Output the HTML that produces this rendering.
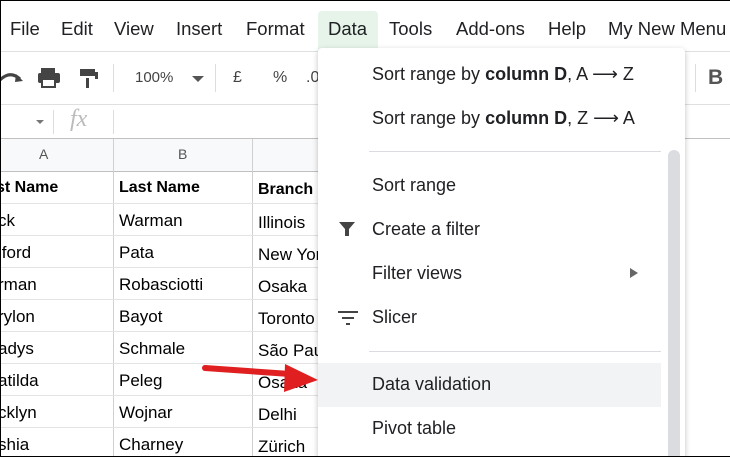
<!DOCTYPE html>
<html style="overflow:hidden;width:730px;height:457px"><head><style>
*{margin:0;padding:0;box-sizing:border-box}
body{width:730px;height:457px;overflow:hidden;background:#fff;font-family:"Liberation Sans",Arial,sans-serif;position:relative;color:#202124}
.a{position:absolute;white-space:nowrap}
.m{font-size:18.5px;top:18px;color:#202124}
.hl{position:absolute;left:0;width:318px;height:1px;background:#e2e3e3}
.vl{position:absolute;width:1px;background:#e2e3e3}
.c{font-size:17px;position:absolute;white-space:nowrap;color:#000}
.mi{position:absolute;left:372px;font-size:18px;color:#202124;white-space:nowrap}
</style></head><body>
<div style="position:absolute;left:0;top:0;width:730px;height:457px;border:1px solid #000;border-right:none;z-index:50;pointer-events:none"></div>
<div class="a" style="left:318px;top:11px;width:60px;height:40px;background:#e6f4ea;border-radius:4px 4px 0 0"></div>
<div class="a m" style="left:10px">File</div>
<div class="a m" style="left:61px">Edit</div>
<div class="a m" style="left:114px">View</div>
<div class="a m" style="left:176px">Insert</div>
<div class="a m" style="left:246px">Format</div>
<div class="a m" style="left:328px">Data</div>
<div class="a m" style="left:389px">Tools</div>
<div class="a m" style="left:456px">Add-ons</div>
<div class="a m" style="left:548px">Help</div>
<div class="a m" style="left:608px">My New Menu</div>
<div class="a" style="left:0;top:51px;width:730px;height:1px;background:#e0e0e0"></div>
<svg class="a" style="left:0;top:66px" width="130" height="24">
<path d="M0 14 Q10 4 20 13" stroke="#444" stroke-width="3" fill="none"/><path d="M16 8 L23 15 L15 16Z" fill="#444"/>
<rect x="41" y="2" width="14" height="5" fill="#444"/><rect x="38" y="7" width="22" height="10" rx="2" fill="#444"/><rect x="42" y="13" width="13" height="8" fill="#fff" stroke="#444" stroke-width="2"/>
<rect x="80" y="3" width="15" height="7" fill="#444"/><rect x="95" y="6" width="3" height="7" fill="#444"/><rect x="86" y="12" width="3" height="10" fill="#444"/>
</svg>
<div class="a" style="left:113px;top:64px;width:1px;height:28px;background:#ddd"></div>
<div class="a" style="left:135px;top:69px;font-size:15px;color:#444">100%</div>
<div class="a" style="left:192px;top:76px;border:6px solid transparent;border-top:6px solid #555;border-bottom:none"></div>
<div class="a" style="left:215px;top:64px;width:1px;height:28px;background:#ddd"></div>
<div class="a" style="left:233px;top:69px;font-size:16px;color:#444">£</div>
<div class="a" style="left:273px;top:69px;font-size:16px;color:#444">%</div>
<div class="a" style="left:306px;top:69px;font-size:16px;color:#444">.0</div>
<div class="a" style="left:708px;top:66px;font-size:21px;font-weight:bold;color:#555">B</div>
<div class="a" style="left:695px;top:64px;width:1px;height:28px;background:#ddd"></div>
<div class="a" style="left:0;top:104px;width:730px;height:1px;background:#e0e0e0"></div>
<div class="a" style="left:36px;top:120px;border:4px solid transparent;border-top:4px solid #777;border-bottom:none"></div>
<div class="a" style="left:53px;top:110px;width:1px;height:24px;background:#ddd"></div>
<div class="a" style="left:70px;top:106px;font-size:24px;font-style:italic;color:#bbb;font-family:'Liberation Serif',serif">fx</div>
<div class="a" style="left:113px;top:110px;width:1px;height:24px;background:#ddd"></div>
<div class="a" style="left:0;top:138px;width:730px;height:1px;background:#c0c0c0"></div>
<div class="a" style="left:0;top:139px;width:318px;height:32px;background:#f8f9fa"></div>
<div class="a" style="left:39px;top:146px;font-size:14px;color:#555">A</div>
<div class="a" style="left:178px;top:146px;font-size:14px;color:#555">B</div>
<div class="a" style="left:0;top:171px;width:318px;height:1px;background:#c0c0c0"></div>
<div class="vl" style="left:113px;top:139px;height:318px;background:#d0d0d0"></div>
<div class="vl" style="left:252px;top:139px;height:318px;background:#d0d0d0"></div>
<div class="hl" style="top:203px"></div><div class="hl" style="top:235px"></div><div class="hl" style="top:267px"></div><div class="hl" style="top:299px"></div><div class="hl" style="top:331px"></div><div class="hl" style="top:363px"></div><div class="hl" style="top:395px"></div><div class="hl" style="top:427px"></div>
<div class="c" style="left:-4px;top:179px;font-weight:bold;font-size:16px">st Name</div>
<div class="c" style="left:119px;top:179px;font-weight:bold;font-size:16px">Last Name</div>
<div class="c" style="left:258px;top:181px;font-weight:bold;font-size:16px">Branch</div>
<div class="c" style="left:-2px;top:211px">ck</div><div class="c" style="left:119px;top:211px">Warman</div><div class="c" style="left:258px;top:213px">Illinois</div>
<div class="c" style="left:-2px;top:243px">lford</div><div class="c" style="left:119px;top:243px">Pata</div><div class="c" style="left:258px;top:245px">New York</div>
<div class="c" style="left:-2px;top:275px">rman</div><div class="c" style="left:119px;top:275px">Robasciotti</div><div class="c" style="left:258px;top:277px">Osaka</div>
<div class="c" style="left:-2px;top:307px">rylon</div><div class="c" style="left:119px;top:307px">Bayot</div><div class="c" style="left:258px;top:309px">Toronto</div>
<div class="c" style="left:-2px;top:339px">adys</div><div class="c" style="left:119px;top:339px">Schmale</div><div class="c" style="left:258px;top:341px">São Paulo</div>
<div class="c" style="left:-2px;top:371px">atilda</div><div class="c" style="left:119px;top:371px">Peleg</div><div class="c" style="left:258px;top:373px">Osaka</div>
<div class="c" style="left:-2px;top:403px">cklyn</div><div class="c" style="left:119px;top:403px">Wojnar</div><div class="c" style="left:258px;top:405px">Delhi</div>
<div class="c" style="left:-2px;top:435px">shia</div><div class="c" style="left:119px;top:435px">Charney</div><div class="c" style="left:258px;top:437px">Zürich</div>
<div class="a" style="left:318px;top:48px;width:367px;height:409px;background:#fff;border-radius:4px 4px 0 0;box-shadow:0 2px 6px rgba(0,0,0,.25);z-index:10"></div>
<div class="a" style="z-index:11;left:0;top:0;width:730px;height:457px;overflow:hidden">
<div class="mi" style="top:64px">Sort range by <b>column D</b>, A ⟶ Z</div>
<div class="mi" style="top:108px">Sort range by <b>column D</b>, Z ⟶ A</div>
<div class="a" style="left:369px;top:151px;width:292px;height:1px;background:#dadce0"></div>
<div class="a" style="left:668px;top:150px;width:12px;height:320px;background:#dadce0;border-radius:6px"></div>
<div class="mi" style="top:175px">Sort range</div>
<svg class="a" style="left:338px;top:221px" width="18" height="18"><path d="M1 1 H17 L11 8 V15 H7 V8Z" fill="#444"/></svg>
<div class="mi" style="top:219px">Create a filter</div>
<div class="mi" style="top:263px">Filter views</div>
<div class="a" style="left:630px;top:268px;border:5px solid transparent;border-left:8px solid #666;border-right:none"></div>
<svg class="a" style="left:338px;top:310px" width="20" height="16"><rect x="0" y="1" width="20" height="2" fill="#444"/><rect x="4" y="7" width="12" height="2" fill="#444"/><rect x="8" y="13" width="4" height="2" fill="#444"/></svg>
<div class="mi" style="top:307px">Slicer</div>
<div class="a" style="left:369px;top:351px;width:292px;height:1px;background:#dadce0"></div>
<div class="a" style="left:318px;top:363px;width:343px;height:44px;background:#f1f3f4"></div>
<div class="mi" style="top:374px">Data validation</div>
<div class="mi" style="top:418px">Pivot table</div>
</div>
<svg class="a" style="left:0;top:0;z-index:20" width="730" height="457"><path d="M205 368 L290 374" stroke="#e02020" stroke-width="6" stroke-linecap="round"/><path d="M285 364 L318 380 L284 392Z" fill="#e02020"/></svg>
</body></html>
